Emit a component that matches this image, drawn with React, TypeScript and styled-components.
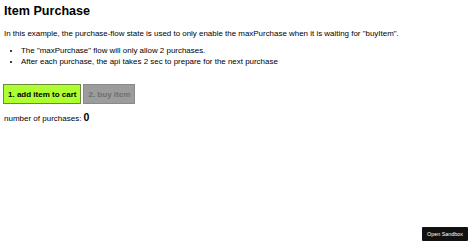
import styled, { createGlobalStyle } from 'styled-components';

const GlobalStyle = createGlobalStyle`
  html, body {
    margin: 0;
    padding: 0;
    background: #fff;
  }
  body {
    font-family: "Liberation Sans", Arial, sans-serif;
    color: #000;
  }
`;

const Page = styled.div`
  position: relative;
  width: 474px;
  height: 248px;
  padding: 0 4px;
  box-sizing: border-box;
`;

const Title = styled.h1`
  margin: 0;
  padding-top: 4px;
  font-size: 12.6px;
  line-height: 15px;
  font-weight: bold;
`;

const Intro = styled.p`
  margin: 9px 0 0;
  font-size: 7.95px;
  line-height: 11px;
`;

const Notes = styled.ul`
  margin: 6px 0 0;
  padding-left: 17px;
  font-size: 7.95px;
  line-height: 11px;
`;

const Actions = styled.div`
  display: flex;
  gap: 2px;
  margin-top: 17px;
  margin-left: -1px;
`;

const StepButton = styled.button<{ $active?: boolean }>`
  height: 20px;
  padding: 0 4px;
  font-family: "Liberation Sans", Arial, sans-serif;
  font-size: 8px;
  font-weight: bold;
  border: 1px solid ${(p) => (p.$active ? '#6c8a3a' : '#8a8a8a')};
  background: ${(p) => (p.$active ? '#adff2f' : '#9c9c9c')};
  color: ${(p) => (p.$active ? '#000' : '#6e6e6e')};
`;

const Count = styled.p`
  margin: 7px 0 0;
  font-size: 8px;
  color: #000;
  display: flex;
  align-items: baseline;
  gap: 2px;

  strong {
    font-size: 10.5px;
  }
`;

const SandboxLink = styled.a`
  position: absolute;
  right: 6px;
  bottom: 7px;
  background: #111;
  color: #fff;
  font-size: 5.4px;
  padding: 4px 5px;
  border-radius: 1px;
  text-decoration: none;
`;

export default function App() {
  return (
    <Page>
      <GlobalStyle />
      <Title>Item Purchase</Title>
      <Intro>
        In this example, the purchase-flow state is used to only enable the maxPurchase when it is
        waiting for "buyItem".
      </Intro>
      <Notes>
        <li>The "maxPurchase" flow will only allow 2 purchases.</li>
        <li>After each purchase, the api takes 2 sec to prepare for the next purchase</li>
      </Notes>
      <Actions>
        <StepButton $active>1. add item to cart</StepButton>
        <StepButton disabled>2. buy item</StepButton>
      </Actions>
      <Count>
        number of purchases: <strong>0</strong>
      </Count>
      <SandboxLink href="#">Open Sandbox</SandboxLink>
    </Page>
  );
}
